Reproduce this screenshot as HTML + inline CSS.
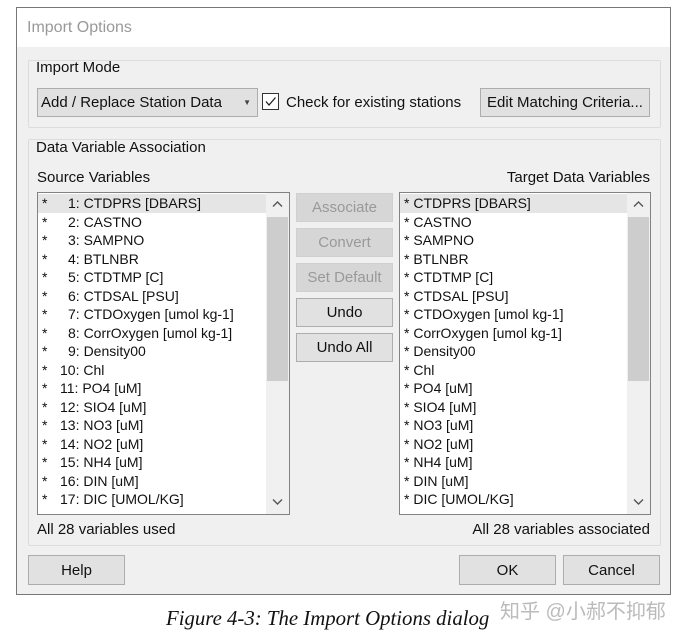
<!DOCTYPE html>
<html><head><meta charset="utf-8"><style>
*{margin:0;padding:0;box-sizing:border-box}
body{width:689px;height:636px;background:#fff;position:relative;overflow:hidden;font-family:"Liberation Sans",sans-serif;font-size:14.5px;color:#111}
.a{position:absolute;white-space:nowrap}
.dlg{position:absolute;left:16px;top:7px;width:655px;height:588px;border:1px solid #777;background:#f0f0f0}
.title{position:absolute;left:0;top:0;width:100%;height:39px;background:#fff;color:#999;font-size:16px;padding:11px 0 0 10px}
.grp{position:absolute;border:1px solid #dcdcdc;border-radius:2px}
.btn{position:absolute;background:#e1e1e1;border:1px solid #adadad;text-align:center;line-height:28px;font-size:15px}
.dis{color:#999;background:#d6d6d6;border-color:#d0d0d0}
.list{position:absolute;background:#fff;border:1px solid #828282;overflow:hidden}
.row{position:absolute;left:0;height:19px;line-height:19px;font-size:14px;white-space:nowrap}
.sb{position:absolute;top:0;width:23px;height:100%;background:#f0f0f0}
.th{position:absolute;left:1px;width:21px;top:24px;height:164px;background:#cdcdcd}
.ar{position:absolute;left:6px}
</style></head><body>
<div class="dlg">
<div class="title">Import Options</div>
<div class="grp" style="left:11px;top:52px;width:633px;height:68px"></div>
<div class="a" style="left:19px;top:51px;font-size:15px">Import Mode</div>
<div class="a" style="left:20px;top:80px;width:221px;height:29px;background:#e1e1e1;border:1px solid #adadad;line-height:28px;padding-left:3px;font-size:15px">Add / Replace Station Data<span style="position:absolute;right:6px;font-size:8px;color:#444">▼</span></div>
<div class="a" style="left:245px;top:85px;width:17px;height:17px;background:#fff;border:1px solid #333"><svg width="15" height="15" viewBox="0 0 15 15" style="position:absolute;left:0;top:0"><path d="M3 7.5 L6 11 L12.5 3.5" fill="none" stroke="#222" stroke-width="1.3"/></svg></div>
<div class="a" style="left:269px;top:86px;font-size:15px">Check for existing stations</div>
<div class="btn" style="left:463px;top:80px;width:170px;height:29px">Edit Matching Criteria...</div>

<div class="grp" style="left:11px;top:131px;width:633px;height:407px"></div>
<div class="a" style="left:19px;top:131px;font-size:15px">Data Variable Association</div>
<div class="a" style="left:20px;top:161px;font-size:15px">Source Variables</div>
<div class="a" style="right:20px;top:161px;font-size:15px">Target Data Variables</div>

<div class="list" style="left:20px;top:184px;width:253px;height:323px" id="L"><div class="sb" style="right:0"><svg class="ar" style="top:7px" width="11" height="8"><path d="M1 6.5 L5.5 2 L10 6.5" fill="none" stroke="#555" stroke-width="1.4"/></svg><div class="th"></div><svg class="ar" style="top:305px" width="11" height="8"><path d="M1 1.5 L5.5 6 L10 1.5" fill="none" stroke="#555" stroke-width="1.4"/></svg></div></div>
<div class="list" style="left:382px;top:184px;width:252px;height:323px" id="R"><div class="sb" style="right:0"><svg class="ar" style="top:7px" width="11" height="8"><path d="M1 6.5 L5.5 2 L10 6.5" fill="none" stroke="#555" stroke-width="1.4"/></svg><div class="th"></div><svg class="ar" style="top:305px" width="11" height="8"><path d="M1 1.5 L5.5 6 L10 1.5" fill="none" stroke="#555" stroke-width="1.4"/></svg></div></div>

<div class="btn dis" style="left:279px;top:185px;width:97px;height:29px">Associate</div>
<div class="btn dis" style="left:279px;top:220px;width:97px;height:29px">Convert</div>
<div class="btn dis" style="left:279px;top:255px;width:97px;height:29px">Set Default</div>
<div class="btn" style="left:279px;top:290px;width:97px;height:29px">Undo</div>
<div class="btn" style="left:279px;top:325px;width:97px;height:29px">Undo All</div>

<div class="a" style="left:20px;top:513px;font-size:15px">All 28 variables used</div>
<div class="a" style="right:20px;top:513px;font-size:15px">All 28 variables associated</div>

<div class="btn" style="left:11px;top:547px;width:97px;height:30px;line-height:30px">Help</div>
<div class="btn" style="left:442px;top:547px;width:97px;height:30px;line-height:30px">OK</div>
<div class="btn" style="left:546px;top:547px;width:97px;height:30px;line-height:30px">Cancel</div>
</div>
<div class="a" style="left:166px;top:607px;font-family:'Liberation Serif',serif;font-style:italic;font-size:20.8px;color:#111">Figure 4-3: The Import Options dialog</div>
<div class="a" style="left:500px;top:595px;font-family:'Liberation Sans','Noto Sans CJK SC',sans-serif;font-size:20px;color:#bbb">知乎 @小郝不抑郁</div>
<script>
var s=["CTDPRS [DBARS]","CASTNO","SAMPNO","BTLNBR","CTDTMP [C]","CTDSAL [PSU]","CTDOxygen [umol kg-1]","CorrOxygen [umol kg-1]","Density00","Chl","PO4 [uM]","SIO4 [uM]","NO3 [uM]","NO2 [uM]","NH4 [uM]","DIN [uM]","DIC [UMOL/KG]"];
var L=document.getElementById('L'),R=document.getElementById('R');
s.forEach(function(t,i){var y=1+i*18.5;var bg=i==0?'background:#e5e5e5;':'';
L.insertAdjacentHTML('beforeend','<div class="row" style="top:'+y+'px;width:228px;'+bg+'"><span style="position:absolute;left:4px">*</span><span style="position:absolute;left:'+(i<9?30:22)+'px">'+(i+1)+': '+t+'</span></div>');
R.insertAdjacentHTML('beforeend','<div class="row" style="top:'+y+'px;width:227px;padding-left:4px;'+bg+'">* '+t+'</div>');});
</script>
</body></html>
